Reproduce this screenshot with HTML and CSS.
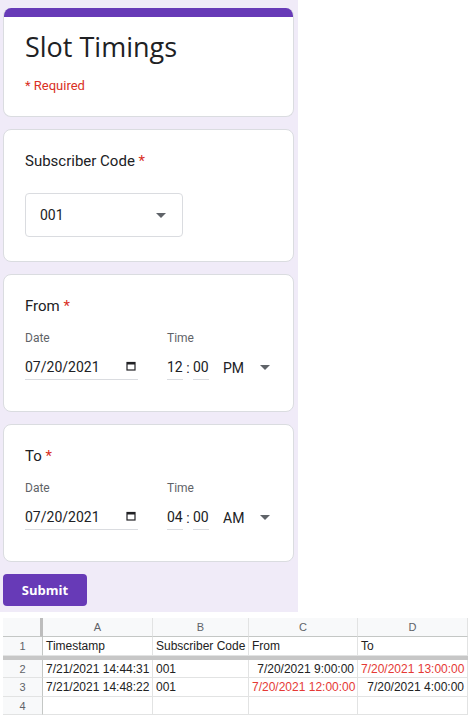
FILE: index.html
```html
<!DOCTYPE html>
<html>
<head>
<meta charset="utf-8">
<link rel="stylesheet" href="styles.css">
</head>
<body>
<div class="form">
  <div class="card title-card">
    <div class="bar"></div>
    <div class="title-body">
      <h1 class="title">Slot Timings</h1>
      <div class="required">* Required</div>
    </div>
  </div>

  <div class="card q">
    <div class="q-label">Subscriber Code <span class="star">*</span></div>
    <div class="select">
      <span class="sel-val">001</span>
      <span class="arrow"></span>
    </div>
  </div>

  <div class="card q q-dt">
    <div class="q-label">From <span class="star">*</span></div>
    <div class="dt">
      <div class="dt-col date-col">
        <div class="sub">Date</div>
        <div class="date-input">
          <span>07/20/2021</span>
          <svg class="cal" width="10" height="10" viewBox="0 0 10 10"><rect x="1" y="1.5" width="8" height="7.5" fill="none" stroke="#202124" stroke-width="1.2"/><rect x="1" y="1.5" width="8" height="2" fill="#202124"/></svg>
        </div>
      </div>
      <div class="dt-col">
        <div class="sub">Time</div>
        <div class="time">
          <span class="tf">12</span><span class="colon">:</span><span class="tf">00</span>
          <span class="ampm">PM</span>
          <span class="arrow"></span>
        </div>
      </div>
    </div>
  </div>

  <div class="card q q-dt">
    <div class="q-label">To <span class="star">*</span></div>
    <div class="dt">
      <div class="dt-col date-col">
        <div class="sub">Date</div>
        <div class="date-input">
          <span>07/20/2021</span>
          <svg class="cal" width="10" height="10" viewBox="0 0 10 10"><rect x="1" y="1.5" width="8" height="7.5" fill="none" stroke="#202124" stroke-width="1.2"/><rect x="1" y="1.5" width="8" height="2" fill="#202124"/></svg>
        </div>
      </div>
      <div class="dt-col">
        <div class="sub">Time</div>
        <div class="time">
          <span class="tf">04</span><span class="colon">:</span><span class="tf">00</span>
          <span class="ampm">AM</span>
          <span class="arrow"></span>
        </div>
      </div>
    </div>
  </div>

  <button class="submit">Submit</button>
</div>

<div class="sheet">
  <div class="c hd corner"></div>
  <div class="c hd">A</div>
  <div class="c hd">B</div>
  <div class="c hd">C</div>
  <div class="c hd">D</div>

  <div class="c rn">1</div>
  <div class="c">Timestamp</div>
  <div class="c">Subscriber Code</div>
  <div class="c">From</div>
  <div class="c">To</div>

  <div class="freeze"></div>

  <div class="c rn">2</div>
  <div class="c">7/21/2021 14:44:31</div>
  <div class="c">001</div>
  <div class="c r">7/20/2021 9:00:00</div>
  <div class="c r red">7/20/2021 13:00:00</div>

  <div class="c rn">3</div>
  <div class="c">7/21/2021 14:48:22</div>
  <div class="c">001</div>
  <div class="c r red">7/20/2021 12:00:00</div>
  <div class="c r">7/20/2021 4:00:00</div>

  <div class="c rn">4</div>
  <div class="c"></div>
  <div class="c"></div>
  <div class="c"></div>
  <div class="c"></div>
</div>
</body>
</html>
```
FILE: styles.css
```css
* { box-sizing: border-box; }
html, body { margin: 0; padding: 0; background: #fff; }
body { width: 474px; height: 720px; overflow: hidden; font-family: Roboto, "Liberation Sans", sans-serif; color: #202124; }

.form {
  width: 298px;
  background: #f0ebf8;
  padding: 8px 4px 6px 3px;
  display: flex;
  flex-direction: column;
  gap: 12px;
}

.card {
  background: #fff;
  border: 1px solid #dadce0;
  border-radius: 8px;
}

.title-card { overflow: hidden; border-top: none; }
.bar { height: 9px; background: #673ab7; }
.title-body { padding: 10px 21px 20px 21px; }
.title {
  margin: 0;
  font-family: "Open Sans", Roboto, sans-serif;
  font-weight: 400;
  font-size: 27px;
  line-height: 40px;
  color: #202124;
}
.required { margin-top: 9px; font-size: 13px; line-height: 20px; color: #d93025; }

.q { padding: 19px 21px 24px 21px; }
.q-dt { padding-bottom: 31px; }
.q-label { font-size: 15px; line-height: 24px; color: #202124; }
.star { color: #d93025; }

.select {
  margin-top: 20px;
  width: 158px;
  height: 44px;
  border: 1px solid #dadce0;
  border-radius: 4px;
  display: flex;
  align-items: center;
  justify-content: space-between;
  padding: 0 16px 0 14px;
  font-size: 14px;
}

.arrow {
  width: 0; height: 0;
  border-left: 5px solid transparent;
  border-right: 5px solid transparent;
  border-top: 5px solid #5f6368;
}

.dt { display: flex; gap: 29px; margin-top: 12px; }
.dt-col { display: flex; flex-direction: column; }
.date-col { width: 113px; }
.sub { font-size: 12px; line-height: 16px; color: #5f6368; }
.date-input {
  margin-top: 9px;
  height: 25px;
  border-bottom: 1px solid #dadce0;
  display: flex;
  align-items: center;
  justify-content: space-between;
  padding-right: 2px;
  font-size: 14px;
}
.cal { margin-bottom: 2px; }

.time {
  margin-top: 9px;
  height: 25px;
  display: flex;
  align-items: center;
  font-size: 14px;
}
.tf { width: 16px; height: 25px; line-height: 25px; border-bottom: 1px solid #dadce0; }
.colon { width: 10px; text-align: center; }
.ampm { margin-left: 14px; width: 37px; }

.submit {
  align-self: flex-start;
  width: 84px;
  height: 32px;
  border: none;
  border-radius: 4px;
  background: #673ab7;
  color: #fff;
  font-family: "Open Sans", Roboto, sans-serif;
  font-weight: 700;
  font-size: 13px;
}

.sheet {
  margin: 6px 0 0 3px;
  display: grid;
  grid-template-columns: 40px 110px 96px 109px 110px;
  grid-template-rows: 19px 19px 4px 18px 19px 18px;
  font-family: Arial, "Liberation Sans", sans-serif;
  font-size: 12px;
  color: #222;
}
.c {
  border-right: 1px solid #e2e3e3;
  border-bottom: 1px solid #e2e3e3;
  padding: 0 3px;
  line-height: 18px;
  white-space: nowrap;
  overflow: hidden;
}
.hd { background: #f8f9fa; color: #5f6368; text-align: center; font-size: 11px; border-bottom-color: #c4c7c5; }
.corner { border-right: 3px solid #bdbdbd; }
.rn { background: #f8f9fa; color: #5f6368; text-align: center; font-size: 11px; border-right-color: #c4c7c5; }
.r { text-align: right; }
.red { color: #e53935; }
.freeze { grid-column: 1 / -1; background: #c7c7c7; }
```
